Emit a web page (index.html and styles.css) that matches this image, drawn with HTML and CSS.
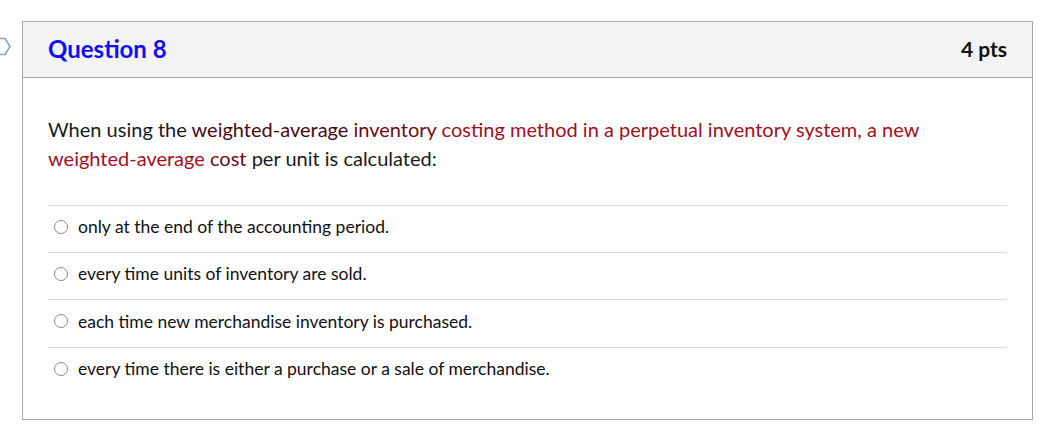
FILE: index.html
```html
<!DOCTYPE html>
<html>
<head>
<meta charset="utf-8">
<link rel="stylesheet" href="styles.css">
</head>
<body>
<div class="page">
  <div class="marker">
    <svg width="12" height="20" viewBox="0 0 12 20"><path d="M0 1.5 H5 L10 9.5 L5 17.5 H0" fill="#fff" stroke="#8fa6b6" stroke-width="1.6" stroke-linejoin="round"/></svg>
  </div>
  <div class="panel">
    <div class="header">
      <span class="title">Question 8</span>
      <span class="pts">4 pts</span>
    </div>
    <div class="body">
      <p class="question"><span class="c0">When using the</span> <span class="c1">weighted-average</span> <span class="c2">inventory</span> <span class="c3">costing method in a perpetual inventory system, a new weighted-average</span> <span class="c2">cost</span> <span class="c0">per unit is calculated:</span></p>
      <div class="answers">
        <div class="answer"><span class="radio"></span><span class="label">only at the end of the accounting period.</span></div>
        <div class="answer"><span class="radio"></span><span class="label">every time units of inventory are sold.</span></div>
        <div class="answer"><span class="radio"></span><span class="label">each time new merchandise inventory is purchased.</span></div>
        <div class="answer"><span class="radio"></span><span class="label">every time there is either a purchase or a sale of merchandise.</span></div>
      </div>
    </div>
  </div>
</div>
</body>
</html>
```
FILE: styles.css
```css
html, body {
  margin: 0;
  padding: 0;
  background: #fff;
}
body {
  font-family: Lato, "Liberation Sans", sans-serif;
  color: #111;
}
.page {
  display: flex;
  align-items: flex-start;
  padding-top: 21px;
}
.marker {
  width: 22px;
  padding-top: 16px;
  flex: none;
}
.marker svg {
  display: block;
}
.panel {
  width: 1009px;
  border: 1px solid #a8a8a8;
  flex: none;
}
.header {
  height: 56px;
  background: #f3f3f3;
  border-bottom: 1px solid #a8a8a8;
  display: flex;
  align-items: center;
  justify-content: space-between;
  padding: 0 25px 2px 25px;
  box-sizing: border-box;
}
.title {
  font-size: 24px;
  font-weight: 700;
  color: #1010f0;
}
.pts {
  font-size: 21px;
  font-weight: 700;
  color: #111;
}
.body {
  padding: 37px 25px 25px 25px;
}
.question {
  margin: 0;
  font-size: 20px;
  line-height: 29px;
  padding-right: 40px;
}
.c0 { color: #1a1a1a; }
.c1 { color: #4a0a12; }
.c2 { color: #6e0b16; }
.c3 { color: #a0101e; }
.answers {
  margin-top: 32px;
}
.answer {
  display: flex;
  align-items: center;
  height: 47px;
  box-sizing: border-box;
  padding-bottom: 5px;
  border-top: 1px solid #dcdcdc;
  font-size: 17.5px;
  color: #111;
  padding-left: 6px;
}
.answer:nth-child(3) {
  height: 48px;
}
.radio {
  width: 12px;
  height: 12px;
  border: 1.3px solid #8a8a8a;
  border-radius: 50%;
  margin-right: 10px;
  flex: none;
}
```
